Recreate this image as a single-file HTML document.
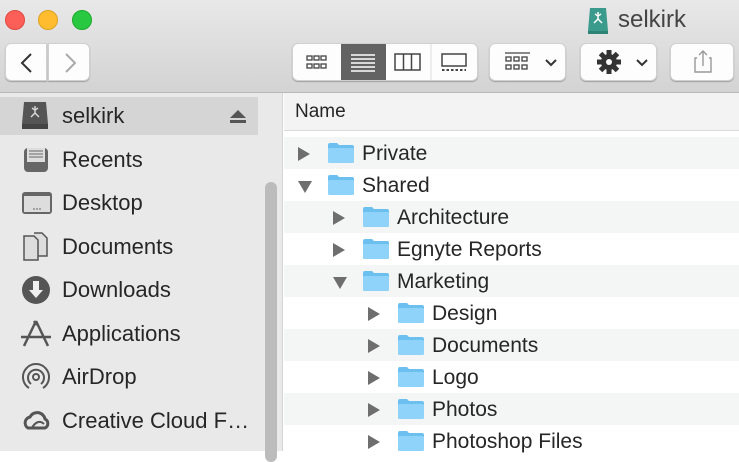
<!DOCTYPE html>
<html><head><meta charset="utf-8"><style>
*{margin:0;padding:0;box-sizing:border-box}
body{width:739px;height:451px;overflow:hidden;font-family:"Liberation Sans",sans-serif;background:#fff;position:relative;color:#262626}
.tb{position:absolute;left:0;top:0;width:739px;height:93px;background:linear-gradient(#e8e8e8,#d3d3d3);border-bottom:1px solid #b8b8b8}
.dot{position:absolute;top:10px;width:20px;height:20px;border-radius:50%}
.btn{position:absolute;top:43px;height:38px;background:#fdfdfd;border-radius:6px;box-shadow:0 1px 1px rgba(0,0,0,.25);border:1px solid #d0d0d0}
.side{position:absolute;left:0;top:93px;width:283px;height:358px;background:#e9e9e9;border-right:1px solid #d4d4d4}
.si{position:absolute;left:0;height:38px;width:258px;font-size:22px;line-height:38px;padding-left:62px}
.si svg{position:absolute;left:20px;top:4px}
.main{position:absolute;left:284px;top:93px;width:455px;height:358px;background:#fff}
.hdr{position:absolute;left:0;top:0;width:455px;height:38px;background:#f3f3f3;border-bottom:1px solid #dcdcdc;font-size:19px;line-height:38px;padding-left:11px}
.row{position:absolute;left:0;width:455px;height:32px;font-size:21px;line-height:32px}
.row.s{background:#f4f5f5}
.tri{position:absolute;top:10px;width:0;height:0}
.tr{border-top:7px solid transparent;border-bottom:7px solid transparent;border-left:12px solid #6e6e6e}
.td{top:12px;border-left:7px solid transparent;border-right:7px solid transparent;border-top:12px solid #6e6e6e}
.fold{position:absolute;top:6px;width:26px;height:20px}
.row span{position:absolute;top:0}
</style></head><body>
<div class="tb">
 <div class="dot" style="left:5px;background:#fc5f57;border:1px solid #de4a42"></div>
 <div class="dot" style="left:38px;background:#febc2e;border:1px solid #dea123"></div>
 <div class="dot" style="left:72px;background:#28c840;border:1px solid #1eaa2e"></div>
 <div class="btn" style="left:5px;width:42px;border-radius:6px 0 0 6px"><svg width="42" height="38"><path d="M25 10 L16 19 L25 28" stroke="#333" stroke-width="2" fill="none"/></svg></div>
 <div class="btn" style="left:48px;width:42px;border-radius:0 6px 6px 0"><svg width="42" height="38"><path d="M17 10 L26 19 L17 28" stroke="#aaa" stroke-width="2" fill="none"/></svg></div>
 <div class="btn" style="left:292px;width:186px;overflow:hidden;padding:0">
  <svg width="186" height="36" style="position:absolute;left:0;top:0">
   <g fill="none" stroke="#444" stroke-width="1.3"><rect x="14" y="12" width="5" height="4"/><rect x="21" y="12" width="5" height="4"/><rect x="28" y="12" width="5" height="4"/><rect x="14" y="20" width="5" height="4"/><rect x="21" y="20" width="5" height="4"/><rect x="28" y="20" width="5" height="4"/></g>
   <rect x="48" y="0" width="45" height="36" fill="#636363"/>
   <g stroke="#fff" stroke-width="1.5"><path d="M58 11h24M58 15h24M58 19h24M58 23h24M58 27h24"/></g>
   <rect x="102" y="10" width="25" height="16" fill="none" stroke="#444" stroke-width="1.5"/><path d="M110.5 10v16M118.5 10v16" stroke="#444" stroke-width="1.5"/>
   <line x1="138" y1="0" x2="138" y2="36" stroke="#ddd"/>
   <rect x="149" y="10" width="24" height="12" fill="none" stroke="#444" stroke-width="1.5"/><path d="M149 26h24" stroke="#444" stroke-width="2" stroke-dasharray="2.5 2"/>
  </svg></div>
 <div class="btn" style="left:489px;width:77px"><svg width="77" height="36"><g fill="none" stroke="#444" stroke-width="1.3"><path d="M15 9h25"/><rect x="16" y="13" width="5" height="4"/><rect x="24" y="13" width="5" height="4"/><rect x="32" y="13" width="5" height="4"/><rect x="16" y="21" width="5" height="4"/><rect x="24" y="21" width="5" height="4"/><rect x="32" y="21" width="5" height="4"/></g><path d="M56 16l5 5 5-5" stroke="#333" stroke-width="2" fill="none"/></svg></div>
 <div class="btn" style="left:580px;width:77px"><svg width="77" height="36"><g transform="translate(28,18)" fill="#333"><circle r="8"/><g><rect x="-2.5" y="-12" width="5" height="24"/><rect x="-2.5" y="-12" width="5" height="24" transform="rotate(45)"/><rect x="-2.5" y="-12" width="5" height="24" transform="rotate(90)"/><rect x="-2.5" y="-12" width="5" height="24" transform="rotate(135)"/></g><circle r="3" fill="#fdfdfd"/></g><path d="M56 16l5 5 5-5" stroke="#333" stroke-width="2" fill="none"/></svg></div>
 <div class="btn" style="left:670px;width:64px"><svg width="64" height="36"><path d="M26 14h-2v14h16v-14h-2M32 22v-15M28 11l4-4 4 4" stroke="#999" stroke-width="1.4" fill="none"/></svg></div>
 <svg style="position:absolute;left:585px;top:7px" width="26" height="28"><path d="M5 1h16l2 23H3z" fill="#3a9a8c"/><rect x="3" y="24" width="20" height="3" fill="#2f8276"/><g stroke="#fff" stroke-width="1.5"><path d="M13 5v7M13 12l-4 4M13 12l4 4M10 7l3 2 3-2"/></g></svg>
 <div style="position:absolute;left:618px;top:6px;font-size:24px;color:#444">selkirk</div>
</div>
<div class="side">
 <div class="si" style="top:4px;background:#d5d5d5">selkirk<svg width="34" height="30" style="top:4px"><path d="M4 1h22l2 22H2z" fill="#555"/><rect x="2" y="23" width="26" height="5" fill="#444"/><g stroke="#ddd" stroke-width="1.4"><path d="M15 5v7M15 12l-4 4M15 12l4 4M12 7l3 2 3-2"/></g></svg><svg width="16" height="14" style="left:230px;top:13px"><path d="M8 0L16 8H0z" fill="#555"/><rect y="10" width="16" height="3" fill="#555"/></svg></div>
 <div class="si" style="top:48px">Recents<svg width="34" height="30"><rect x="4" y="3" width="24" height="24" rx="4" fill="#666"/><rect x="7" y="3" width="18" height="14" fill="#ddd"/><path d="M9 6h14M9 9h14M9 12h14" stroke="#666"/></svg></div>
 <div class="si" style="top:91px">Desktop<svg width="34" height="30"><rect x="2" y="4" width="30" height="22" rx="3" fill="#666"/><rect x="4" y="8" width="26" height="16" fill="#ddd"/><path d="M13 21h8" stroke="#666" stroke-dasharray="2 1"/></svg></div>
 <div class="si" style="top:135px">Documents<svg width="34" height="30"><path d="M4 4h10l4 4v20H4z M14 1h8l5 5v18H18" fill="#ddd" stroke="#555" stroke-width="1.5"/></svg></div>
 <div class="si" style="top:178px">Downloads<svg width="34" height="30"><circle cx="16" cy="15" r="14" fill="#555"/><path d="M13 6h6v9h4l-7 8-7-8h4z" fill="#eee"/></svg></div>
 <div class="si" style="top:222px">Applications<svg width="34" height="30"><path d="M16 2L4 27M16 2l12 25M1 18h30M17 6l-3 -4" stroke="#555" stroke-width="2.5" fill="none"/></svg></div>
 <div class="si" style="top:265px">AirDrop<svg width="34" height="30"><g fill="none" stroke="#555" stroke-width="2"><path d="M9 26A13 13 0 1 1 23 26"/><path d="M11 22A8 8 0 1 1 21 22"/><circle cx="16" cy="15" r="3"/></g></svg></div>
 <div class="si" style="top:309px">Creative Cloud F…<svg width="34" height="30"><g fill="none" stroke="#555" stroke-width="3"><path d="M8 22a6 6 0 0 1 2-11a8 8 0 0 1 15 2a5 5 0 0 1 0 9z"/><path d="M12 22c3-6 8-8 12-4" stroke-width="2"/></g></svg></div>
 <div style="position:absolute;left:265px;top:89px;width:12px;height:280px;border-radius:6px;background:#bcbcbc"></div>
</div>
<div class="main">
 <div class="hdr">Name</div>
 <div id="rows"></div>
</div>
<script>
var d=[["Private",0,0],["Shared",0,1],["Architecture",1,0],["Egnyte Reports",1,0],["Marketing",1,1],["Design",2,0],["Documents",2,0],["Logo",2,0],["Photos",2,0],["Photoshop Files",2,0]];
var h="";
d.forEach(function(r,i){var x=r[1]*35;h+='<div class="row'+(i%2==0?' s':'')+'" style="top:'+(44+i*32)+'px"><div class="tri '+(r[2]?'td':'tr')+'" style="left:'+(14+x)+'px"></div><svg class="fold" style="left:'+(44+x)+'px" viewBox="0 0 26 20"><path d="M0 2a2 2 0 0 1 2-2h7l2 2h13a2 2 0 0 1 2 2v14a2 2 0 0 1-2 2H2a2 2 0 0 1-2-2z" fill="#6cc0ef"/><rect x="0" y="5" width="26" height="15" rx="1.5" fill="#8fd3fa"/></svg><span style="left:'+(78+x)+'px;top:1px">'+r[0]+'</span></div>'});
document.getElementById("rows").innerHTML=h;
</script>
</body></html>
